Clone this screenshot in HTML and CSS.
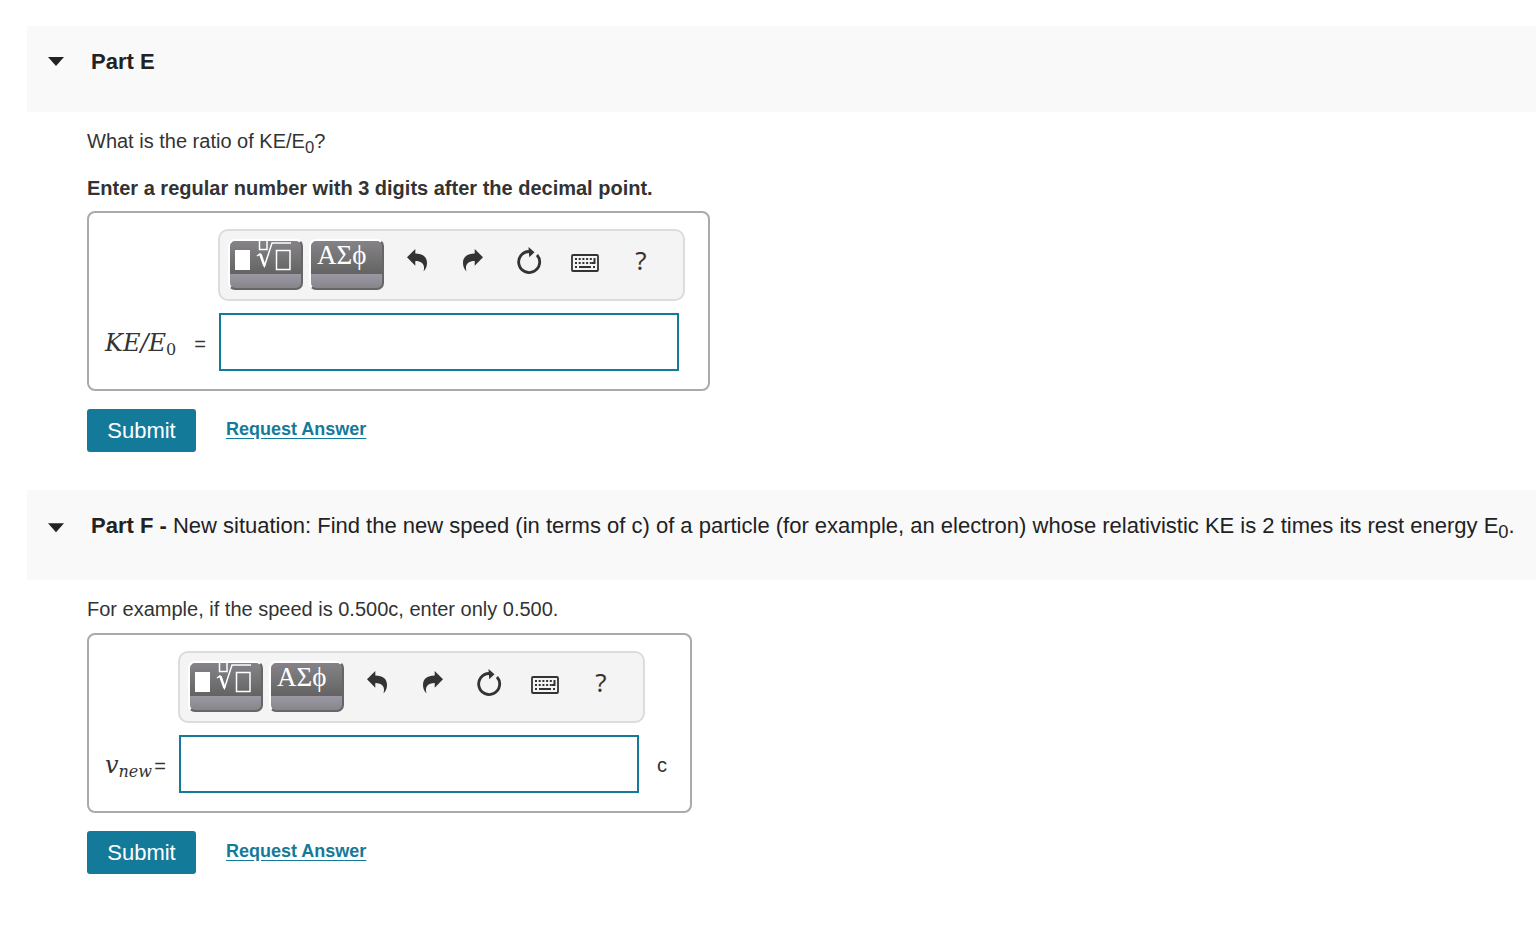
FILE: index.html
```html
<!DOCTYPE html>
<html lang="en">
<head>
    <meta charset="UTF-8">
    <meta name="viewport" content="width=device-width, initial-scale=1.0">
    <title>Relativistic Energy - Parts E and F</title>
    <link rel="stylesheet" href="styles.css">
</head>
<body>
    <!-- shared toolbar icons -->
    <svg class="sprite" aria-hidden="true">
        <symbol id="icon-root" viewBox="0 0 70 34">
            <rect x="5" y="9" width="15" height="20" fill="#fff"/>
            <path d="M29.500 -1V8.500H37V-1" fill="none" stroke="#fff" stroke-width="1.500"/>
            <path d="M27 15L30 13L34.500 25L42 2H61" fill="none" stroke="#fff" stroke-width="1.500"/>
            <path d="M30.500 13.500L34.500 25" stroke="#fff" stroke-width="2.500"/>
            <rect x="46.500" y="9.500" width="13.500" height="19" fill="none" stroke="#fff" stroke-width="1.500"/>
        </symbol>
        <symbol id="icon-undo" viewBox="0 0 28 28">
            <path d="M4 11.300L12.300 3V7.500C20 7.500 24 11 24 17C24 20 23 23 20.500 25.500C22.500 18.500 19 15 12.300 15V19.700Z"/>
        </symbol>
        <symbol id="icon-redo" viewBox="0 0 28 28">
            <path d="M24 11.300L15.700 3V7.500C8 7.500 4 11 4 17C4 20 5 23 7.500 25.500C5.500 18.500 9 15 15.700 15V19.700Z"/>
        </symbol>
        <symbol id="icon-reset" viewBox="0 0 28 28">
            <path d="M22 9A10.500 10.500 0 1 1 14 5.500" fill="none" stroke="#333" stroke-width="2.800"/>
            <path d="M13.500 1L19.500 6.300L14.200 11.300Z"/>
        </symbol>
        <symbol id="icon-keyboard" viewBox="0 0 28 28">
            <rect x="1" y="9" width="26" height="16" rx="1" fill="none" stroke="#333" stroke-width="1.800"/>
            <path d="M4 13H22M4 17H21" fill="none" stroke="#333" stroke-width="2" stroke-dasharray="2 1.700"/>
            <path d="M4 21H6M8 21H20M22 21H24M21 17H23.500V12" fill="none" stroke="#333" stroke-width="2"/>
        </symbol>
    </svg>

    <section class="part">
        <header class="part-header">
            <button class="toggle" type="button" aria-label="Collapse Part E" aria-expanded="true"></button>
            <h2>Part E</h2>
        </header>
        <form class="part-body">
            <p class="question">What is the ratio of KE/E<sub>0</sub>?</p>
            <p class="instructions">Enter a regular number with 3 digits after the decimal point.</p>
            <div class="answer-box answer-ratio">
                <div class="toolbar" role="toolbar" aria-label="Equation tools">
                    <button class="palette" type="button" aria-label="Templates"><svg><use href="#icon-root"/></svg></button>
                    <button class="palette" type="button" aria-label="Symbols">ΑΣϕ</button>
                    <div class="tools">
                        <button type="button" aria-label="Undo"><svg><use href="#icon-undo"/></svg></button>
                        <button type="button" aria-label="Redo"><svg><use href="#icon-redo"/></svg></button>
                        <button type="button" aria-label="Reset"><svg><use href="#icon-reset"/></svg></button>
                        <button type="button" aria-label="Keyboard shortcuts"><svg><use href="#icon-keyboard"/></svg></button>
                        <button class="help" type="button">?</button>
                    </div>
                </div>
                <label for="ratio"><span class="math">KE/E<sub>0</sub></span> <span>=</span></label>
                <input id="ratio" type="text">
            </div>
            <div class="actions">
                <button class="submit" type="button">Submit</button>
                <a href="#">Request Answer</a>
            </div>
        </form>
    </section>

    <section class="part">
        <header class="part-header">
            <button class="toggle" type="button" aria-label="Collapse Part F" aria-expanded="true"></button>
            <h2>Part F - <span>New situation: Find the new speed (in terms of c) of a particle (for example, an electron) whose relativistic KE is 2 times its rest energy E<sub>0</sub>.</span></h2>
        </header>
        <form class="part-body">
            <p class="example">For example, if the speed is 0.500c, enter only 0.500.</p>
            <div class="answer-box answer-speed">
                <div class="toolbar" role="toolbar" aria-label="Equation tools">
                    <button class="palette" type="button" aria-label="Templates"><svg><use href="#icon-root"/></svg></button>
                    <button class="palette" type="button" aria-label="Symbols">ΑΣϕ</button>
                    <div class="tools">
                        <button type="button" aria-label="Undo"><svg><use href="#icon-undo"/></svg></button>
                        <button type="button" aria-label="Redo"><svg><use href="#icon-redo"/></svg></button>
                        <button type="button" aria-label="Reset"><svg><use href="#icon-reset"/></svg></button>
                        <button type="button" aria-label="Keyboard shortcuts"><svg><use href="#icon-keyboard"/></svg></button>
                        <button class="help" type="button">?</button>
                    </div>
                </div>
                <label for="speed"><span class="math">v<sub>new</sub></span> <span>=</span></label>
                <input id="speed" type="text">
                <span class="unit">c</span>
            </div>
            <div class="actions">
                <button class="submit" type="button">Submit</button>
                <a href="#">Request Answer</a>
            </div>
        </form>
    </section>
</body>
</html>
```
FILE: styles.css
```css
* {
    box-sizing: border-box;
}
body {
    margin: 0;
    padding: 26px 0 0 27px;
    background-color: #fff;
    color: #333;
    font-family: "Liberation Sans", Arial, sans-serif;
    font-size: 20px;
    line-height: 30px;
}
button {
    padding: 0;
    border: 0;
    background: none;
    color: inherit;
    font-family: inherit;
    cursor: pointer;
}
sub {
    font-size: smaller;
    line-height: 0;
}
.sprite {
    display: none;
}
.part {
    margin-bottom: 38px;
}
.part-header {
    display: flex;
    align-items: center;
    padding: 21px 20px 35px;
    background-color: #f9f9f9;
    color: #222;
}
.part-header h2 {
    margin: 0;
    font-size: 22px;
    line-height: 30px;
}
.part-header h2 span {
    font-weight: normal;
}
.part-header sub {
    line-height: 26px;
}
.toggle {
    flex: none;
    width: 18px;
    height: 10px;
    margin-right: 26px;
    background-color: #222;
    clip-path: polygon(1px 0, 17px 0, 9px 9px);
}
.part-body {
    padding: 14px 20px 0 60px;
}
.part-body p {
    margin: 0 0 8px;
}
.part-body .question {
    margin-bottom: 17px;
}
.part-body .example {
    margin-bottom: 9px;
}
.instructions {
    font-weight: bold;
}
.answer-box {
    display: grid;
    gap: 12px;
    align-items: center;
    width: fit-content;
    padding: 16px 23px 18px 16px;
    border: 2px solid #aaa;
    border-radius: 8px;
}
.answer-ratio {
    grid-template-columns: 101px 467px;
}
.answer-speed {
    grid-template-columns: 61px 467px 10px;
}
.toolbar {
    grid-column: 2;
    display: flex;
    align-items: flex-start;
    gap: 7px;
    height: 72px;
    padding: 8px;
    border: 2px solid #dcdcdc;
    border-radius: 10px;
    background-color: #f4f4f4;
}
.palette {
    display: flex;
    align-items: flex-start;
    width: 75px;
    height: 51px;
    padding-left: 6px;
    overflow: hidden;
    border: 2px solid;
    border-color: #fff #666 #666 #fff;
    border-radius: 7px;
    background: linear-gradient(#858388, #636363 33px, #9b98a3 33px, #87858c);
    color: #fff;
    font-family: "Liberation Serif", serif;
    font-size: 27px;
    line-height: 28px;
}
.palette + .palette {
    margin-left: -1px;
}
.palette svg {
    flex: none;
    width: 70px;
    height: 34px;
    margin-left: -6px;
}
.tools {
    display: flex;
    margin-left: -2px;
}
.tools button {
    width: 56px;
    height: 42px;
}
.tools svg {
    display: block;
    width: 28px;
    height: 28px;
    margin: 0 auto;
    fill: #333;
}
.tools .help {
    font-family: "Noto Sans", sans-serif;
    font-size: 26px;
}
.answer-box label {
    grid-column: 1;
    display: flex;
    justify-content: space-between;
    align-items: baseline;
    padding-top: 2px;
    white-space: nowrap;
}
.math {
    font-family: "DejaVu Serif", serif;
    font-size: 24px;
    font-style: italic;
}
.math sub {
    font-size: 16px;
    vertical-align: -4px;
}
.answer-ratio sub {
    font-style: normal;
}
.answer-box input {
    width: 460px;
    height: 58px;
    margin-left: 1px;
    padding: 0 12px;
    border: 2px solid #147a99;
    background-color: #fff;
    color: #333;
    font: inherit;
}
.unit {
    padding-top: 2px;
}
.actions {
    display: flex;
    align-items: center;
    gap: 30px;
    margin-top: 18px;
}
.submit {
    width: 109px;
    height: 43px;
    border-radius: 3px;
    background-color: #147a99;
    color: #fff;
    font-size: 22px;
}
.actions a {
    padding-bottom: 4px;
    color: #147a99;
    font-size: 18px;
    font-weight: bold;
    text-underline-offset: 3px;
}
```
